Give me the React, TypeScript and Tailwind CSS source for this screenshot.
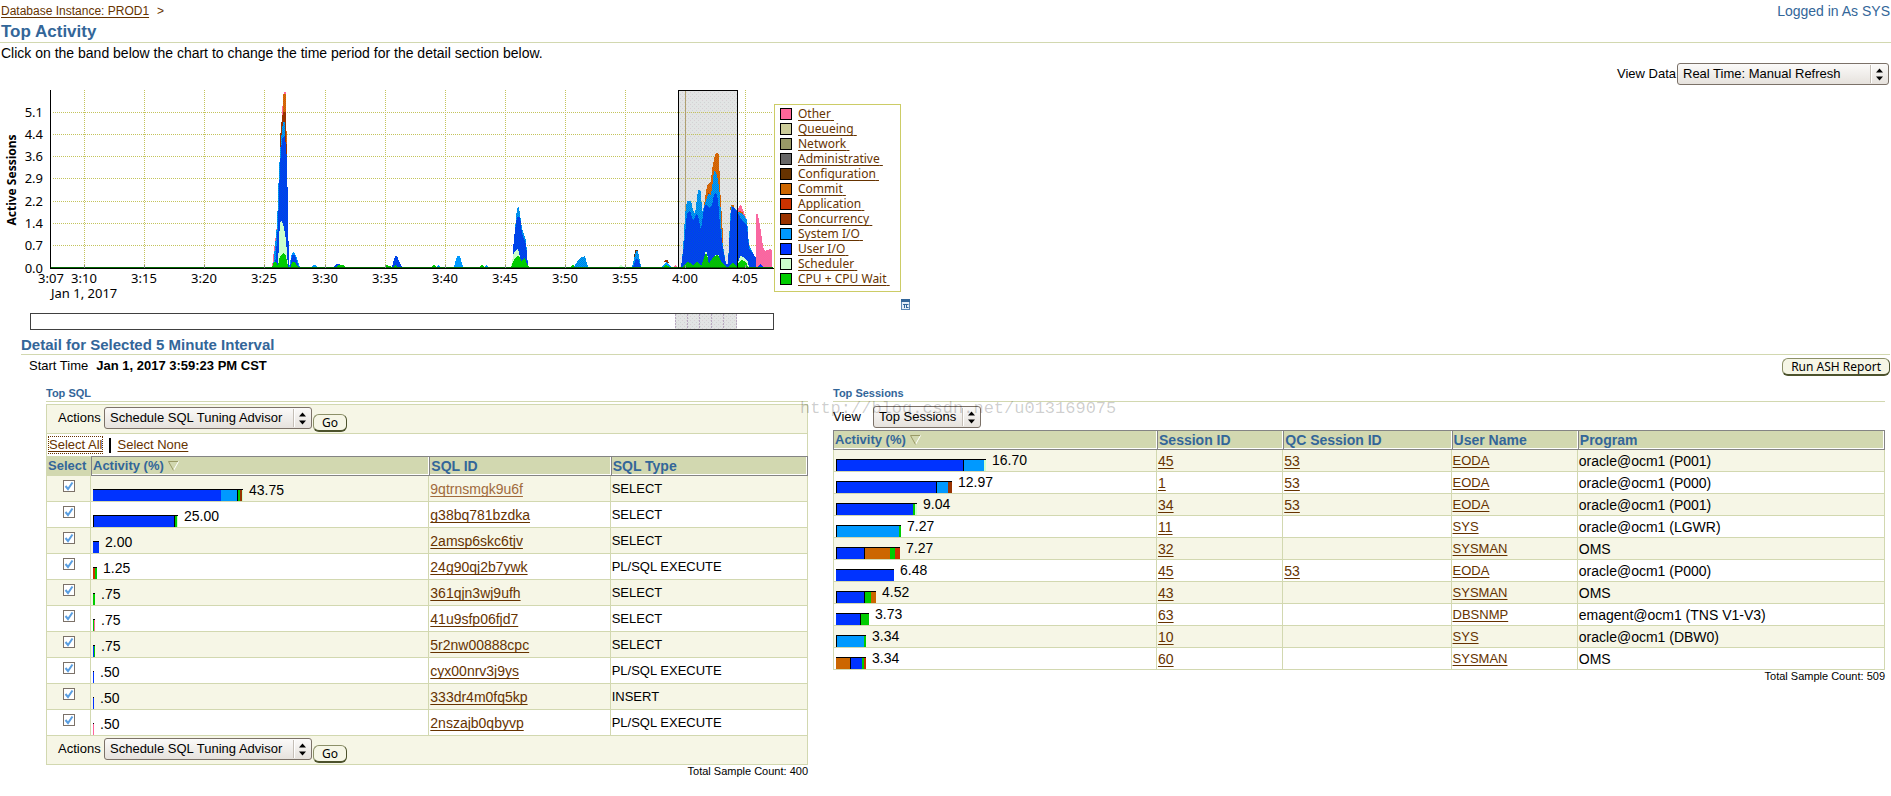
import { ReactNode } from 'react'

const colors = {
  other: '#ff6699',
  queueing: '#cccc99',
  network: '#999966',
  administrative: '#666666',
  configuration: '#663300',
  commit: '#cc6600',
  application: '#cc3300',
  concurrency: '#993300',
  system: '#0099ff',
  user: '#0033ff',
  scheduler: '#ccffcc',
  cpu: '#00cc00',
  line: '#000000',
}

type Segment = [keyof typeof colors, number]

interface SqlRow {
  activity: string
  bar: Segment[]
  id: string
  type: string
  visited?: boolean
}

interface SessionRow {
  activity: string
  bar: Segment[]
  id: string
  qc?: string
  user: string
  program: string
}

const legend = [
  { label: 'Other', color: colors.other },
  { label: 'Queueing', color: colors.queueing },
  { label: 'Network', color: colors.network },
  { label: 'Administrative', color: colors.administrative },
  { label: 'Configuration', color: colors.configuration },
  { label: 'Commit', color: colors.commit },
  { label: 'Application', color: colors.application },
  { label: 'Concurrency', color: colors.concurrency },
  { label: 'System I/O', color: colors.system },
  { label: 'User I/O', color: colors.user },
  { label: 'Scheduler', color: colors.scheduler },
  { label: 'CPU + CPU Wait', color: colors.cpu },
]

const sqlRows: SqlRow[] = [
  { activity: '43.75', bar: [['user', 128], ['system', 16], ['line', 1], ['cpu', 2], ['concurrency', 2], ['scheduler', 1]], id: '9qtrnsmgk9u6f', type: 'SELECT', visited: true },
  { activity: '25.00', bar: [['line', 1], ['user', 80], ['line', 1], ['cpu', 2], ['scheduler', 1]], id: 'g38bq781bzdka', type: 'SELECT' },
  { activity: '2.00', bar: [['user', 6]], id: '2amsp6skc6tjv', type: 'SELECT' },
  { activity: '1.25', bar: [['application', 2], ['cpu', 2]], id: '24g90qj2b7ywk', type: 'PL/SQL EXECUTE' },
  { activity: '.75', bar: [['cpu', 2]], id: '361qjn3wj9ufh', type: 'SELECT' },
  { activity: '.75', bar: [['cpu', 1], ['other', 1]], id: '41u9sfp06fjd7', type: 'SELECT' },
  { activity: '.75', bar: [['user', 1], ['cpu', 1]], id: '5r2nw00888cpc', type: 'SELECT' },
  { activity: '.50', bar: [['user', 1]], id: 'cyx00nrv3j9ys', type: 'PL/SQL EXECUTE' },
  { activity: '.50', bar: [['user', 1]], id: '333dr4m0fq5kp', type: 'INSERT' },
  { activity: '.50', bar: [['other', 1]], id: '2nszajb0qbyvp', type: 'PL/SQL EXECUTE' },
]

const sessionRows: SessionRow[] = [
  { activity: '16.70', bar: [['line', 1], ['user', 126], ['line', 1], ['system', 20], ['scheduler', 2]], id: '45', qc: '53', user: 'EODA', program: 'oracle@ocm1 (P001)' },
  { activity: '12.97', bar: [['line', 1], ['user', 99], ['line', 1], ['system', 11], ['concurrency', 4]], id: '1', qc: '53', user: 'EODA', program: 'oracle@ocm1 (P000)' },
  { activity: '9.04', bar: [['line', 1], ['user', 76], ['cpu', 2], ['scheduler', 2]], id: '34', qc: '53', user: 'EODA', program: 'oracle@ocm1 (P001)' },
  { activity: '7.27', bar: [['line', 1], ['system', 62], ['cpu', 2]], id: '11', user: 'SYS', program: 'oracle@ocm1 (LGWR)' },
  { activity: '7.27', bar: [['line', 1], ['user', 27], ['line', 1], ['commit', 25], ['cpu', 5], ['application', 5]], id: '32', user: 'SYSMAN', program: 'OMS' },
  { activity: '6.48', bar: [['user', 58]], id: '45', qc: '53', user: 'EODA', program: 'oracle@ocm1 (P000)' },
  { activity: '4.52', bar: [['line', 1], ['user', 27], ['line', 1], ['cpu', 6], ['commit', 5]], id: '43', user: 'SYSMAN', program: 'OMS' },
  { activity: '3.73', bar: [['user', 24], ['line', 1], ['cpu', 8]], id: '63', user: 'DBSNMP', program: 'emagent@ocm1 (TNS V1-V3)' },
  { activity: '3.34', bar: [['line', 1], ['system', 27], ['cpu', 2]], id: '10', user: 'SYS', program: 'oracle@ocm1 (DBW0)' },
  { activity: '3.34', bar: [['commit', 14], ['line', 1], ['user', 11], ['cpu', 2], ['application', 2]], id: '60', user: 'SYSMAN', program: 'OMS' },
]

const yTicks = [
  { label: '5.1', y: 26 },
  { label: '4.4', y: 48 },
  { label: '3.6', y: 70 },
  { label: '2.9', y: 92 },
  { label: '2.2', y: 115 },
  { label: '1.4', y: 137 },
  { label: '0.7', y: 159 },
]

const xTicks = [
  { label: '3:10', x: 84 },
  { label: '3:15', x: 144 },
  { label: '3:20', x: 204 },
  { label: '3:25', x: 264 },
  { label: '3:30', x: 325 },
  { label: '3:35', x: 385 },
  { label: '3:40', x: 445 },
  { label: '3:45', x: 505 },
  { label: '3:50', x: 565 },
  { label: '3:55', x: 625 },
  { label: '4:00', x: 685 },
  { label: '4:05', x: 745 },
]

// stacked areas, drawn back to front
const areas: { fill: string; points: string }[] = [
  { fill: colors.other, points: '272,181 277,139 279,95 283,10 284,6 286,6 286,12 286,100 288,181' },
  { fill: 'url(#commit)', points: '280,60 283,40 283,8 286,8 287,80 288,181' },
  { fill: colors.concurrency, points: '280,54 281,40 283,26 286,26 287,90 288,181' },
  { fill: 'url(#system)', points: '273,181 277,139 279,84 281,54 283,36 285,36 286,74 288,181' },
  { fill: 'url(#user)', points: '275,181 278,139 280,79 282,52 285,50 287,74 289,181' },
  { fill: colors.scheduler, points: '278,181 279,154 280,136 282,135 284,142 286,154 288,181' },
  { fill: colors.cpu, points: '272,181 274,176 276,176 278,180 280,170 284,167 286,170 288,181' },
  { fill: colors.system, points: '289,181 292,167 294,166 297,172 300,181' },
  { fill: 'url(#user)', points: '290,181 292,169 295,169 299,181' },
  { fill: colors.cpu, points: '291,181 292,176 295,176 298,181' },
  { fill: colors.system, points: '312,181 313,179 316,179 317,181' },
  { fill: 'url(#user)', points: '333,181 336,178 339,178 342,181' },
  { fill: colors.cpu, points: '336,181 338,179 343,179 345,181' },
  { fill: colors.cpu, points: '384,181 386,179 390,180 391,181' },
  { fill: 'url(#user)', points: '392,181 395,170 397,170 399,175 402,181' },
  { fill: colors.cpu, points: '393,181 395,179 398,181' },
  { fill: colors.cpu, points: '431,181 434,179 437,181' },
  { fill: colors.system, points: '436,181 438,179 440,181' },
  { fill: colors.system, points: '454,181 457,170 460,170 463,181' },
  { fill: colors.cpu, points: '479,181 482,179 485,181' },
  { fill: colors.system, points: '484,181 486,179 488,181' },
  { fill: 'url(#system)', points: '512,181 515,143 517,122 519,121 522,142 526,154 528,181' },
  { fill: 'url(#user)', points: '512,181 514,151 517,131 520,131 522,148 526,158 528,181' },
  { fill: colors.scheduler, points: '511,181 514,166 518,163 520,171 522,181' },
  { fill: colors.cpu, points: '511,181 514,174 517,170 520,171 521,175 525,172 527,178 529,181' },
  { fill: colors.cpu, points: '570,181 573,179 575,181' },
  { fill: 'url(#system)', points: '574,181 578,174 582,171 585,170 588,181' },
  { fill: colors.scheduler, points: '618,181 621,179 624,181' },
  { fill: colors.configuration, points: '634,172 635,164 638,164 639,172' },
  { fill: 'url(#system)', points: '632,181 636,165 638,165 641,181' },
  { fill: 'url(#user)', points: '633,181 636,173 638,173 641,181' },
  { fill: colors.system, points: '661,181 666,176 671,181' },
  { fill: colors.concurrency, points: '664,176 665,174 668,174 669,177' },
  { fill: colors.cpu, points: '663,181 666,179 670,181' },
  { fill: colors.other, points: '673,181 675,179 678,181' },
  { fill: 'url(#commit)', points: '702,130 704,119 707,100 711,95 712,84 715,69 717,66 719,69 720,100 723,150 722,181 702,181' },
  { fill: colors.concurrency, points: '707,112 709,106 711,112 711,122 707,122' },
  { fill: colors.commit, points: '730,124 731,119 734,119 735,128' },
  { fill: colors.other, points: '737,128 739,120 741,119 744,126 746,132 746,140 737,134' },
  { fill: colors.commit, points: '739,130 739,125 743,126 743,131' },
  { fill: 'url(#system)', points: '681,181 683,164 685,129 687,115 691,115 693,124 695,128 698,104 701,105 702,126 705,118 708,108 711,109 713,94 714,85 716,86 718,94 720,110 722,154 726,178 728,178 730,134 731,120 734,122 737,125 741,127 745,131 747,134 749,159 755,171 757,181' },
  { fill: 'url(#user)', points: '681,181 684,159 687,127 690,124 693,135 697,127 699,134 701,144 704,122 706,118 709,122 712,120 714,108 716,106 718,114 720,139 723,164 726,178 728,178 731,126 733,120 737,126 742,134 747,140 749,162 756,172 757,181' },
  { fill: colors.scheduler, points: '703,181 705,166 707,166 709,181' },
  { fill: colors.scheduler, points: '712,181 715,169 719,169 721,181' },
  { fill: colors.scheduler, points: '737,181 740,170 744,171 748,176 749,181' },
  { fill: 'url(#cpu)', points: '683,181 687,176 690,177 693,180 697,175 701,180 703,175 705,168 707,168 709,178 713,171 717,169 719,171 722,177 726,181' },
  { fill: 'url(#cpu)', points: '728,181 733,177 737,181' },
  { fill: colors.cpu, points: '737,181 739,176 742,174 746,176 748,181' },
  { fill: 'url(#other)', points: '756,181 756,129 757,127 758,129 760,139 763,161 765,165 770,163 772,164 772,181' },
  { fill: colors.user, points: '758,181 760,178 763,181' },
]

function Dither({ id, base, dot }: { id: string; base: string; dot: string }) {
  return (
    <pattern id={id} width="2" height="2" patternUnits="userSpaceOnUse">
      <rect width="2" height="2" fill={base} />
      <rect width="1" height="1" fill={dot} />
      <rect x="1" y="1" width="1" height="1" fill={dot} />
    </pattern>
  )
}

function ActivityChart() {
  return (
    <svg width="774" height="245" className="shrink-0" shapeRendering="crispEdges" role="img" aria-label="Active Sessions">
      <defs>
        <Dither id="user" base="#0033ff" dot="#0055d4" />
        <Dither id="system" base="#0099ff" dot="#0088d8" />
        <Dither id="commit" base="#e66a00" dot="#c06010" />
        <Dither id="cpu" base="#00cc00" dot="#08b010" />
        <Dither id="other" base="#ff6699" dot="#f468a8" />
        <pattern id="shade" width="4" height="4" patternUnits="userSpaceOnUse">
          <rect width="4" height="4" fill="#e2e4e4" />
          <rect width="1" height="1" fill="#d0d4d4" />
          <rect x="2" y="2" width="1" height="1" fill="#d8d0d4" />
        </pattern>
      </defs>

      <rect x="678" y="4" width="60" height="178" fill="url(#shade)" />
      {yTicks.map((t) => (
        <line key={t.label} x1="53" x2="773" y1={t.y + 0.5} y2={t.y + 0.5} stroke="#c4c45c" strokeDasharray="1 1" />
      ))}
      {xTicks.map((t) => (
        <line key={t.label} x1={t.x + 0.5} x2={t.x + 0.5} y1="4" y2="181" stroke="#c4c45c" strokeDasharray="1 1" />
      ))}
      <line x1="685.5" x2="685.5" y1="5" y2="181" stroke="#b0a070" />
      {areas.map((a, i) => (
        <polygon key={i} points={a.points} fill={a.fill} />
      ))}
      <rect x="51" y="181" width="722" height="1" fill="#006600" />
      <rect x="51" y="182" width="723" height="1" fill="#000" />
      <rect x="50" y="4" width="1" height="179" fill="#000" />
      <path d="M678.5 182V4.5H737.5V182" fill="none" stroke="#000" />
      {xTicks.map((t) => (
        <rect key={t.label} x={t.x} y="179" width="1" height="3" fill="#888" />
      ))}

      <g fontFamily="'Noto Sans', sans-serif" fontSize="13" fill="#000" shapeRendering="auto">
        {yTicks.map((t) => (
          <text key={t.label} x="43" y={t.y + 5} textAnchor="end">{t.label}</text>
        ))}
        <text x="43" y="187" textAnchor="end">0.0</text>
        <text x="51" y="197" textAnchor="middle">3:07</text>
        {xTicks.map((t) => (
          <text key={t.label} x={t.x} y="197" textAnchor="middle">{t.label}</text>
        ))}
        <text x="51" y="212">Jan 1, 2017</text>
        <text x="16" y="94" fontSize="12" fontWeight="bold" textAnchor="middle" transform="rotate(-90 16 94)">Active Sessions</text>
      </g>

      <rect x="30.5" y="227.5" width="743" height="16" fill="#fff" stroke="#404040" />
      <rect x="675" y="228" width="62" height="15" fill="url(#shade)" />
      {[675, 687, 699, 711, 723, 736].map((x) => (
        <line key={x} x1={x + 0.5} x2={x + 0.5} y1="228" y2="243" stroke="#b8a8c0" strokeDasharray="2 1" />
      ))}
    </svg>
  )
}

function Dropdown({ id, options, className }: { id: string; options: string[]; className: string }) {
  return (
    <span className={`relative inline-block ${className}`}>
      <select
        id={id}
        className="block h-[22px] w-full appearance-none rounded-[3px] border border-[#7b7168] bg-linear-to-b from-[#fbfaf9] to-[#e6e2dd] pl-[5px] pr-5 text-[13px] leading-5 text-black"
      >
        {options.map((o) => (
          <option key={o}>{o}</option>
        ))}
      </select>
      <svg width="18" height="18" className="pointer-events-none absolute right-px top-[2px]">
        <path d="M0.5 0V18" stroke="#c4beb6" />
        <path d="M1.5 0V18" stroke="#fff" />
        <path d="M6 7.5L9.5 3.5L13 7.5ZM6 11.5L9.5 15.5L13 11.5Z" fill="#000" />
      </svg>
    </span>
  )
}

function PushButton({ children }: { children: ReactNode }) {
  return (
    <button
      type="button"
      className="h-[18px] rounded-[6px] border border-b-2 border-[#8c9068] border-b-[#4c522c] border-r-[#4c522c] bg-[#f6f6e6] px-2 font-['Noto_Sans',sans-serif] text-[12px] leading-[15px] text-black"
    >
      {children}
    </button>
  )
}

function Link({ children, visited = false }: { children: ReactNode; visited?: boolean }) {
  return (
    <a
      href="#"
      className={`underline [text-decoration-skip-ink:none] underline-offset-2 ${visited ? 'text-[#a06a3c]' : 'text-[#663300]'}`}
    >
      {children}
    </a>
  )
}

function Th({ children, small = false }: { children: ReactNode; small?: boolean }) {
  return (
    <th
      className={`h-5 border-b border-l border-t border-[#848484] bg-[#d2d8b0] px-px text-left leading-4 text-[#336699] shadow-[inset_-1px_-1px_0_#ffffff] last:border-r ${small ? 'text-[13px]' : 'text-[14px]'}`}
    >
      {children}
    </th>
  )
}

function SortHeader() {
  return (
    <Th small>
      <span className="flex items-center gap-1">
        Activity (%)
        <svg width="11" height="10">
          <path d="M10.5 0.5L5.5 9.5" stroke="#fff" fill="none" />
          <path d="M5.5 9.5L0.5 0.5H10" stroke="#999966" fill="none" />
        </svg>
      </span>
    </Th>
  )
}

function ActivityBar({ bar, value }: { bar: Segment[]; value: string }) {
  return (
    <div className="flex items-end gap-[6px] pl-px">
      <span className="flex h-3 border-t border-black">
        {bar.map(([name, width], i) => (
          <span key={i} style={{ width, background: colors[name] }} />
        ))}
      </span>
      <span className="mb-[3px] text-[14px] leading-4">{value}</span>
    </div>
  )
}

function ActionsBar({ id, className }: { id: string; className: string }) {
  return (
    <div className={`flex h-[29px] items-start border-x border-[#d2d8b0] bg-[#f6f6e6] pl-[11px] pt-[2px] ${className}`}>
      <label htmlFor={id} className="w-[46px] pt-[3px] leading-4">Actions</label>
      <Dropdown id={id} options={['Schedule SQL Tuning Advisor', 'Create SQL Tuning Set']} className="mr-px w-[208px]" />
      <span className="flex pt-[7px]">
        <PushButton>Go</PushButton>
      </span>
    </div>
  )
}

const cell = 'border-b border-r border-[#d2d8b0] px-px'

function TopSql() {
  return (
    <section>
      <h3 className="mb-[2px] h-4 border-b border-[#d2d8b0] text-[11px] font-bold leading-[14px] text-[#336699]">Top SQL</h3>
      <ActionsBar id="sql-action-top" className="border-t" />
      <div className="flex h-[23px] items-center border-x border-t border-[#d2d8b0] pl-px text-[13px]">
        <span className="border border-dotted border-[#663300] leading-4">
          <Link>Select All</Link>
        </span>
        <span className="mx-[6px] h-[15px] w-[2px] bg-black" />
        <Link>Select None</Link>
      </div>
      <table className="w-full table-fixed border-separate border-spacing-0">
        <colgroup>
          <col className="w-[45px]" />
          <col className="w-[44.4%]" />
          <col className="w-[23.8%]" />
          <col />
        </colgroup>
        <thead>
          <tr>
            <th className="h-5 bg-[#d2d8b0] pl-[2px] text-left text-[13px] leading-4 text-[#336699]">Select</th>
            <SortHeader />
            <Th>SQL ID</Th>
            <Th>SQL Type</Th>
          </tr>
        </thead>
        <tbody>
          {sqlRows.map((row) => (
            <tr key={row.id} className="h-[26px] odd:bg-[#f6f6e6]">
              <td className={`${cell} border-l`}>
                <span className="relative mx-auto mb-[6px] block size-3">
                  <input
                    type="checkbox"
                    defaultChecked
                    aria-label={`Select ${row.id}`}
                    className="block size-3 appearance-none border border-[#7b7168] bg-white"
                  />
                  <svg width="12" height="12" className="pointer-events-none absolute left-0 top-0">
                    <path d="M2.5 6L5 9L9.5 2.5" fill="none" stroke="#5a9ee0" strokeWidth="2" />
                  </svg>
                </span>
              </td>
              <td className={`${cell} align-bottom`}><ActivityBar bar={row.bar} value={row.activity} /></td>
              <td className={`${cell} text-[14px]`}><Link visited={row.visited}>{row.id}</Link></td>
              <td className={cell}>{row.type}</td>
            </tr>
          ))}
        </tbody>
      </table>
      <ActionsBar id="sql-action-bottom" className="border-b" />
      <p className="text-right text-[11px] leading-3">Total Sample Count: 400</p>
    </section>
  )
}

function TopSessions() {
  return (
    <section>
      <h3 className="h-4 border-b border-[#d2d8b0] text-[11px] font-bold leading-[14px] text-[#336699]">Top Sessions</h3>
      <div className="flex h-7 items-center pt-px">
        <label htmlFor="session-view" className="w-10">View</label>
        <Dropdown id="session-view" options={['Top Sessions', 'Top Services', 'Top Modules']} className="w-[108px]" />
      </div>
      <table className="w-full table-fixed border-separate border-spacing-0">
        <colgroup>
          <col className="w-[30.8%]" />
          <col className="w-[12%]" />
          <col className="w-[16%]" />
          <col className="w-[12%]" />
          <col />
        </colgroup>
        <thead>
          <tr>
            <SortHeader />
            <Th>Session ID</Th>
            <Th>QC Session ID</Th>
            <Th>User Name</Th>
            <Th>Program</Th>
          </tr>
        </thead>
        <tbody>
          {sessionRows.map((row, i) => (
            <tr key={i} className="h-[22px] odd:bg-[#f6f6e6]">
              <td className={`${cell} border-l align-bottom`}><ActivityBar bar={row.bar} value={row.activity} /></td>
              <td className={`${cell} text-[14px]`}><Link>{row.id}</Link></td>
              <td className={`${cell} text-[14px]`}>{row.qc && <Link>{row.qc}</Link>}</td>
              <td className={cell}><Link>{row.user}</Link></td>
              <td className={`${cell} text-[14px]`}>{row.program}</td>
            </tr>
          ))}
        </tbody>
      </table>
      <p className="text-right text-[11px] leading-3">Total Sample Count: 509</p>
    </section>
  )
}

export default function App() {
  return (
    <main className="relative bg-white font-['Liberation_Sans',Arial,sans-serif] text-[13px] leading-4 text-black">
      <header className="border-b border-[#d2d8b0] px-px">
        <div className="flex h-[22px] items-center justify-between">
          <nav className="flex gap-2 text-[12px] text-[#663300]">
            <Link>Database Instance: PROD1</Link>
            <span>&gt;</span>
          </nav>
          <span className="text-[14px] text-[#336699]">Logged in As SYS</span>
        </div>
        <h1 className="h-5 text-[17px] font-bold leading-5 text-[#336699]">Top Activity</h1>
      </header>

      <p className="h-[19px] px-px pt-[2px] text-[14px]">
        Click on the band below the chart to change the time period for the detail section below.
      </p>
      <div className="flex h-6 items-center justify-end pr-[2px]">
        <label htmlFor="view-data" className="pr-px">View Data</label>
        <Dropdown id="view-data" options={['Real Time: Manual Refresh', 'Real Time: 15 Second Refresh', 'Historical']} className="w-[212px]" />
      </div>

      <div className="flex items-start">
        <ActivityChart />
        <ul className="mt-[18px] h-[188px] w-[127px] border border-[#cccc66] pl-[5px] pt-px font-['Noto_Sans',sans-serif] text-[12px]">
          {legend.map((item) => (
            <li key={item.label} className="flex h-[15px] items-center gap-[6px] leading-[15px]">
              <span className="size-3 border border-black" style={{ background: item.color }} />
              <Link>{item.label}&nbsp;</Link>
            </li>
          ))}
        </ul>
        <svg width="9" height="11" className="mt-[213px]">
          <rect x="0.5" y="0.5" width="8" height="10" fill="#e4eef8" stroke="#5c88b4" />
          <rect width="9" height="3" fill="#336699" />
          <path d="M2 5.5H5M3.5 5V9M5.5 5V9M5.5 5.5H7.5M5.5 8.5H7.5" stroke="#336699" />
        </svg>
      </div>

      <section>
        <h2 className="ml-[21px] mr-px h-6 border-b border-[#d2d8b0] pt-[5px] text-[15px] font-bold leading-[18px] text-[#336699]">
          Detail for Selected 5 Minute Interval
        </h2>
        <div className="flex h-[31px] justify-between pl-[29px] pr-px pt-[3px]">
          <p className="flex gap-2">
            <span>Start Time</span>
            <b>Jan 1, 2017 3:59:23 PM CST</b>
          </p>
          <PushButton>Run ASH Report</PushButton>
        </div>
        <div className="grid grid-cols-[762fr_1052fr] items-start gap-[25px] pl-[46px] pr-[6px]">
          <TopSql />
          <TopSessions />
        </div>
      </section>

      <div className="pointer-events-none absolute left-[800px] top-[399px] font-['Liberation_Mono',monospace] text-[17px] leading-5 text-black/20">
        http://blog.csdn.net/u013169075
      </div>
    </main>
  )
}
